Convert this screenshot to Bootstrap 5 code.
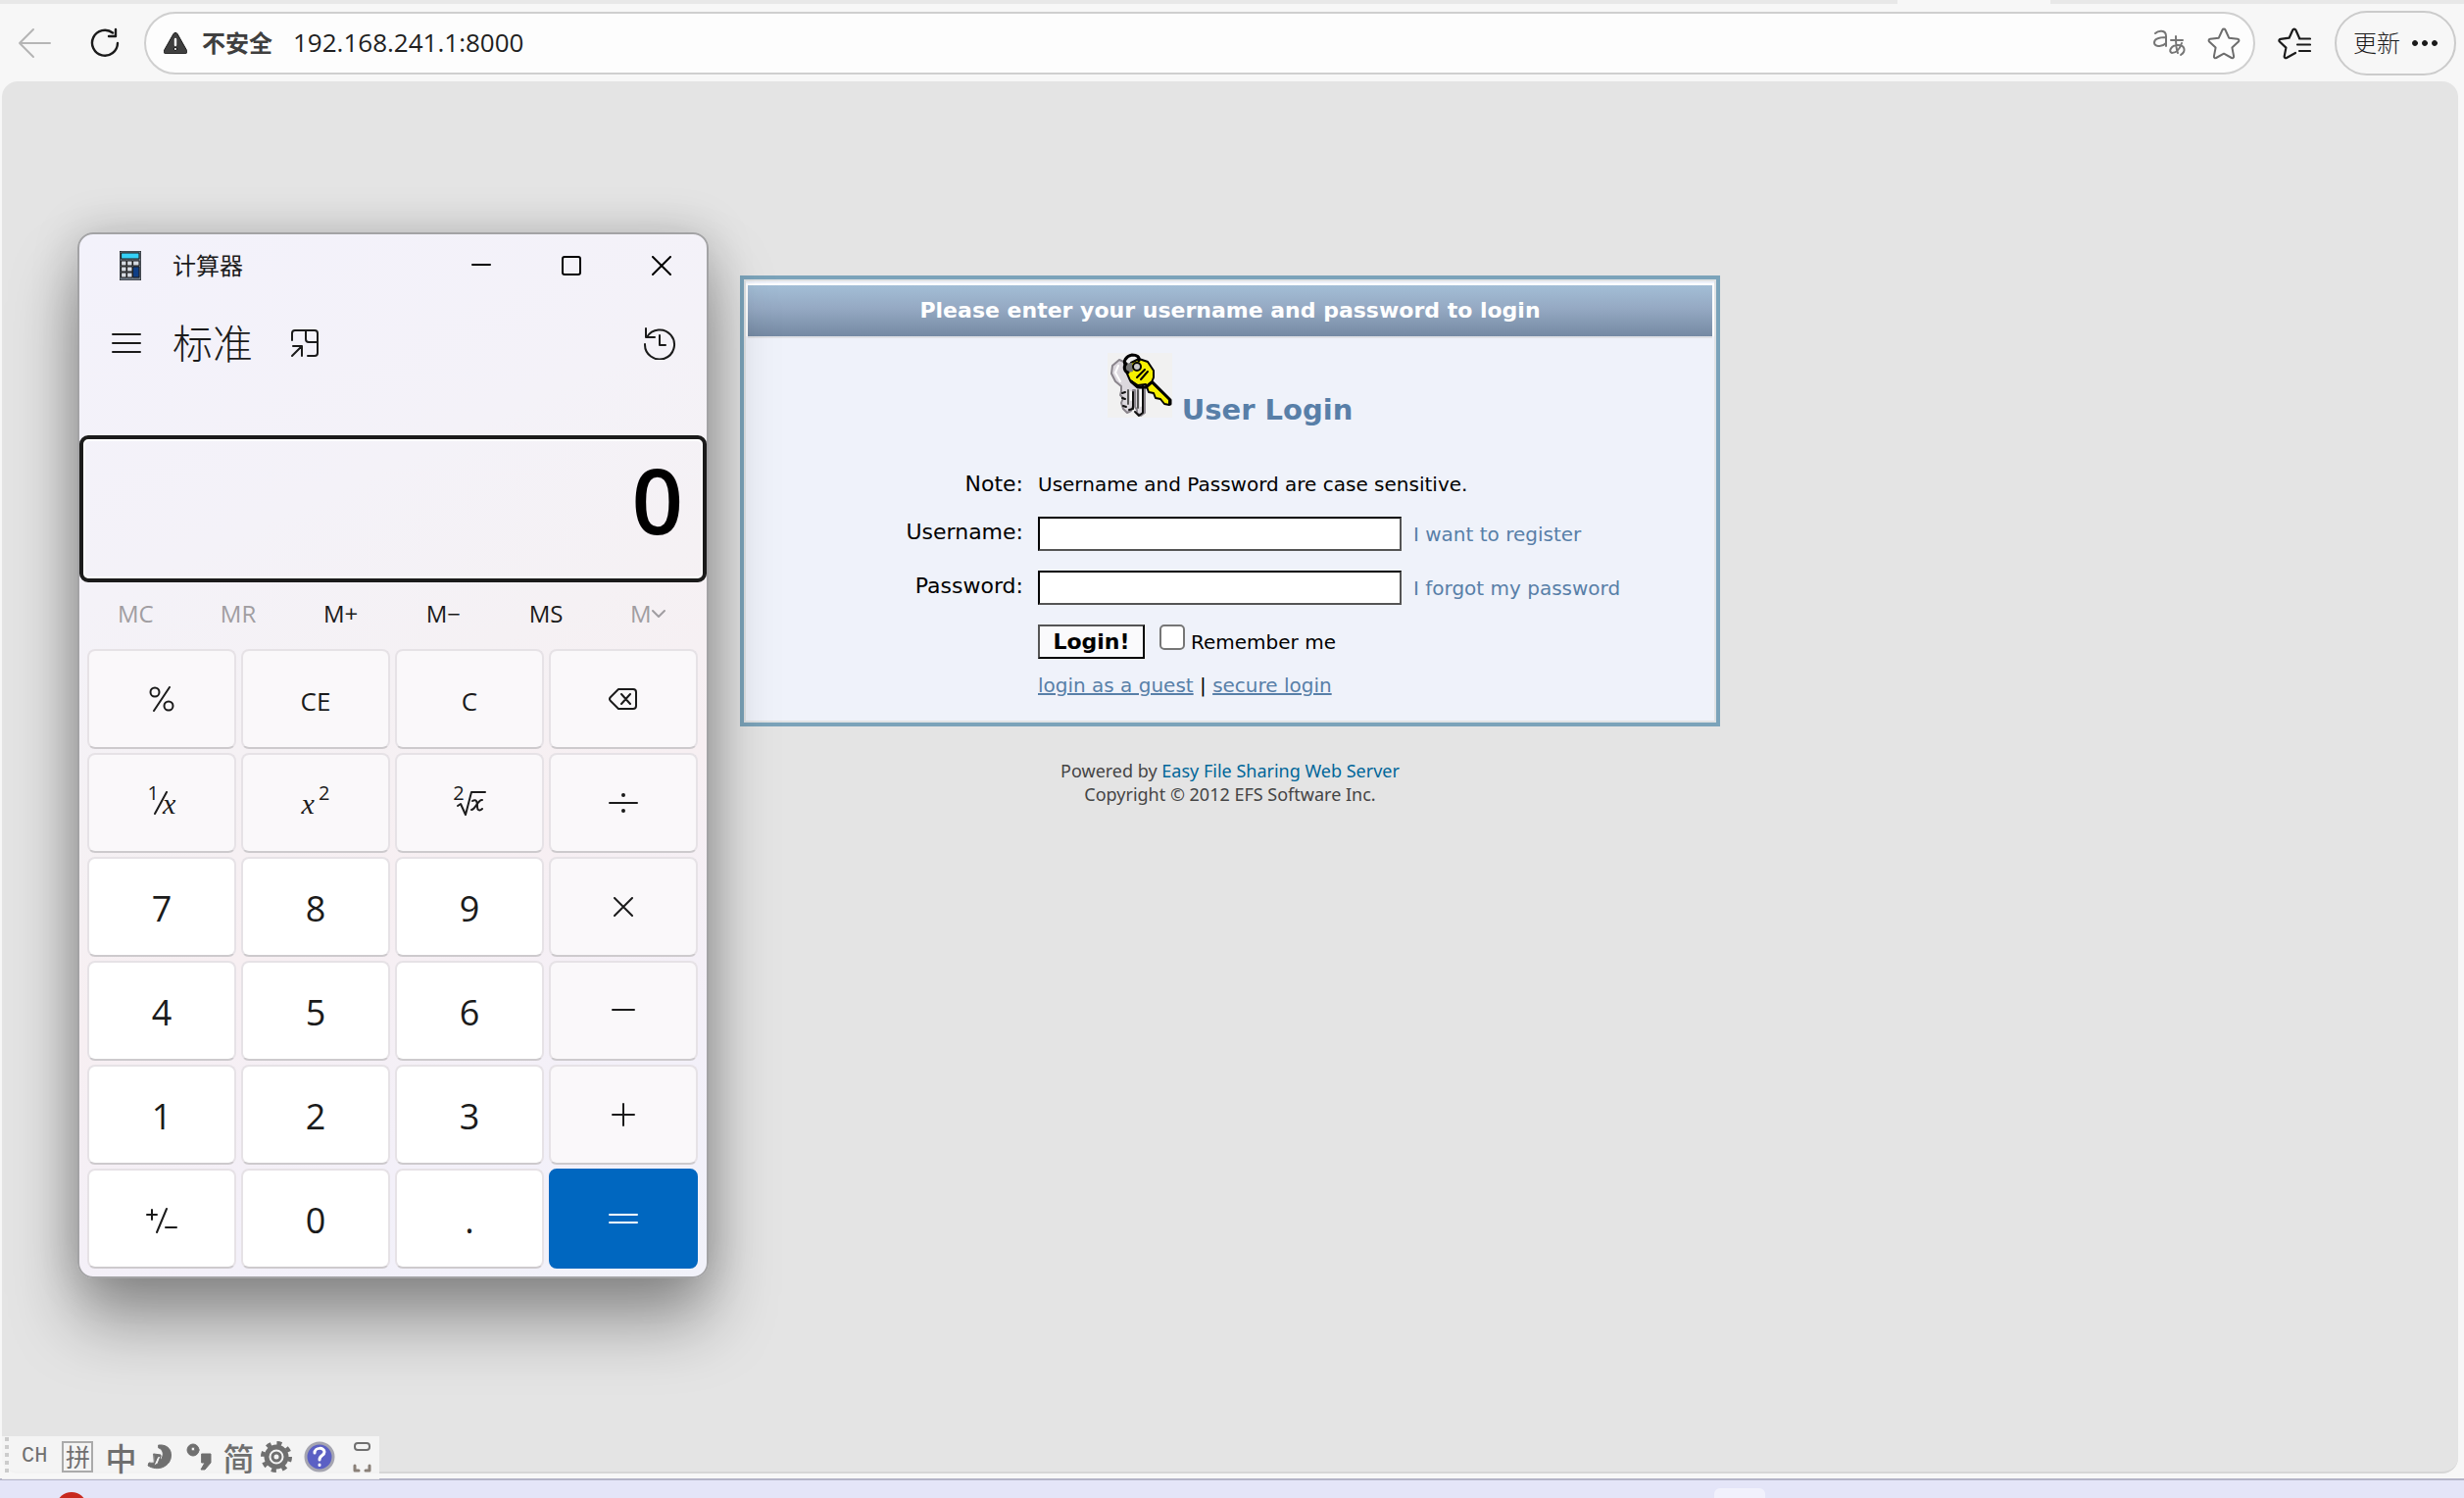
<!DOCTYPE html>
<html lang="zh-CN">
<head>
<meta charset="utf-8">
<meta name="viewport" content="width=device-width, initial-scale=1">
<title>User Login</title>
<link href="https://cdn.jsdelivr.net/npm/bootstrap@5.3.0/dist/css/bootstrap.min.css" rel="stylesheet">
<style>
:root { --ui: "Open Sans", "Noto Sans CJK SC", sans-serif; --web: "DejaVu Sans", sans-serif; }
body { font-family: var(--ui); background: #f7f7f7; color: #1b1b1b; min-height: 100vh; overflow: hidden; }
svg { display: block; fill: none; stroke: currentColor; stroke-linecap: round; stroke-linejoin: round; }
button { font-family: inherit; color: inherit; }
.plain { border: 0; background: none; padding: 0; display: flex; align-items: center; justify-content: center; }

/* browser chrome */
.tabstrip { height: 4px; background: #e8e8e8; }
.tab-active { width: 156px; height: 4px; margin-right: 422px; background: #f7f7f7; }
.toolbar { height: 79px; padding: 0 8px 0 18px; }
.address { height: 64px; border: 2px solid #cfcfcf; border-radius: 32px; background: #fdfdfd; margin-left: 25px; padding: 0 13px 0 18px; }
.insecure { font-size: 24px; font-weight: 700; color: #3f3f3f; margin-left: 15px; }
.url { border: 0; outline: 0; background: transparent; font-size: 26px; color: #1f1f1f; padding: 0; margin-left: 21px; min-width: 0; }
.update { height: 66px; border: 2px solid #cbcbcb; border-radius: 33px; font-size: 24px; font-weight: 300; width: 124px; gap: 12px; margin-left: 24px; }

/* page */
.viewport { margin: 0 6px 0 2px; background: #e4e4e4; border-radius: 16px; border-bottom: 2px solid #d6d6d6; padding-top: 198px; font-family: var(--web); color: #000; position: relative; }
.login-box { width: 1000px; border: 4px solid #7ba3ba; background: #eff2fa; outline: 2px solid #e0e2e4; outline-offset: -6px; padding: 4px 4px 21px; }
.login-head { height: 54px; margin: 0; border: 2px solid #fff; border-width: 2px 0 0; box-shadow: -2px 0 #fff, 2px 0 #fff, 0 2px #dfe1e6; background: linear-gradient(#a3bed6, #95a9c3 45%, #758aa3); color: #fff; font-size: 22px; font-weight: 700; }
.login-title { font-size: 29px; line-height: 36px; font-weight: 700; color: #587fa8; margin: 0; padding: 40px 0 0 10px; }
.title-row { padding-top: 17px; height: 127px; }
.form-line { display: grid; grid-template-columns: 281px 1fr; column-gap: 15px; align-items: center; font-size: 20px; }
.form-line > label, .form-line > span:first-child { font-size: 22px; text-align: right; }
.form-line > label { padding-bottom: 4px; }
.h-note { height: 47px; }
.h-field { height: 55px; }
.h-links { height: 34px; }
.text-in { width: 371px; height: 35px; border: 2px solid #555; border-top-color: #000; border-left-color: #000; background: #fff; padding: 0 4px; font-size: 20px; }
.side-link { color: #587fa8; text-decoration: none; margin-left: 12px; }
.under-link { color: #587fa8; text-decoration: underline; }
.login-btn { width: 109px; height: 35px; border: 2px solid #000; border-top-color: #555; border-left-color: #555; background: #fafafc; font-size: 22px; font-weight: 700; padding: 0; line-height: 1; }
.tick { appearance: none; width: 26px; height: 26px; border: 2px solid #767676; border-radius: 5px; background: #fff; margin: 0 6px 0 15px; align-self: flex-start; }
.foot { font-family: "Noto Sans", sans-serif; font-size: 18px; line-height: 24px; color: #444; margin-top: 33px; }
.foot a { color: #069; text-decoration: none; }

/* calculator window */
.calc { position: absolute; left: 77px; top: 154px; width: 644px; border: 2px solid #a3a3a5; border-radius: 16px; background: linear-gradient(155deg, #f3f2fb 0%, #f4f2f8 28%, #f5f1f4 45%, #f7eff2 60%, #f3f0f9 82%, #f1f2fa 100%); box-shadow: 0 44px 68px rgba(0,0,0,.36), 0 0 48px rgba(0,0,0,.18); font-family: var(--ui); color: #1b1b1b; }
.calc-title { height: 64px; padding-left: 41px; font-size: 24px; }
.cap { width: 92px; height: 60px; color: #000; }
.calc-nav { height: 94px; padding: 0 31px 0 33px; }
.mode { font-size: 41px; line-height: 60px; font-weight: 300; margin: 0 38px 0 32px; }
.display { display: block; height: 150px; margin-top: 47px; border: 4px solid #1b1b1b; border-radius: 9px; box-shadow: inset 0 0 0 2px #fff; text-align: right; font-size: 92px; line-height: 124px; font-weight: 600; color: #000; padding-right: 20px; }
.mem { height: 68px; padding: 0 7px 4px 5px; font-size: 24px; }
.mem button { flex: 1; height: 64px; }
.mem button:disabled { color: #a09da1; }
.keys { display: grid; grid-template-columns: repeat(4, 1fr); gap: 4px 5px; padding: 0 9px 8px 8px; }
.key { height: 102px; border: 2px solid #e6e2e6; border-bottom-color: #cdcacd; border-radius: 8px; background: #faf8fa; font-size: 26px; display: flex; align-items: center; justify-content: center; padding: 0; }
.num { background: #fff; font-size: 36px; padding-top: 3px; }
.eq { background: #0067c0; border-color: #0067c0; color: #fff; }
.ital { font-family: "Liberation Serif", serif; font-style: italic; font-size: 30px; }
.power { font-size: 20px; }
.lap { margin-left: -5px; }

/* input method bar */
.ime { position: absolute; left: 0; bottom: -8px; width: 385px; height: 44px; background: rgba(247,247,247,.85); color: #6f6f6f; font-family: "Noto Sans CJK SC", sans-serif; padding: 0 0 2px 3px; }
.grip { width: 4px; height: 40px; background: repeating-linear-gradient(#ccc 0 4px, transparent 4px 8px); margin-right: 13px; }
.ime-ch { font: 22px/32px "Liberation Mono", monospace; margin-right: 15px; }
.ime-pin { width: 32px; height: 32px; border: 2px solid #aaa; font-size: 25px; line-height: 27px; text-align: center; margin-right: 12px; }
.ime-zh { width: 34px; font-size: 32px; line-height: 32px; font-weight: 500; }
.desk { height: 20px; margin-top: 5px; border-top: 2px solid #b5b5c8; background: #e4e5f8; overflow: hidden; padding-left: 57px; }
.dot-red { width: 32px; height: 32px; border-radius: 50%; background: #c8281e; margin-top: 12px; }
.task { width: 52px; height: 30px; border-radius: 6px; background: #f1f1fc; margin: 8px 713px 0 auto; }
</style>
</head>
<body class="d-flex flex-column">
<div class="tabstrip d-flex justify-content-end"><div class="tab-active"></div></div>
<header class="toolbar d-flex align-items-center flex-shrink-0">
  <button class="plain" aria-label="Back" style="color:#b5b5b5"><svg width="34" height="32" viewBox="0 0 34 32" stroke-width="2"><path d="M16 2 2 16l14 14M2 16h31"/></svg></button>
  <button class="plain" aria-label="Refresh" style="margin-left:40px"><svg width="30" height="32" viewBox="0 0 30 32" stroke-width="2.400"><path d="M28 16a13 13 0 1 1-5-10.500M26 2v7h-7"/></svg></button>
  <div class="address d-flex align-items-center flex-grow-1">
    <svg width="24" height="22" viewBox="0 0 24 22" stroke="none"><path fill="#3f3f3f" d="M10 1.500a2.300 2.300 0 0 1 4 0l9.600 17A2.300 2.300 0 0 1 21.600 22H2.400a2.300 2.300 0 0 1-2-3.500z"/><path d="M12 7v6" stroke="#fff" stroke-width="2.400"/><circle cx="12" cy="17" r="1.600" fill="#fff"/></svg>
    <span class="insecure">不安全</span>
    <input class="url flex-grow-1" aria-label="Address" value="192.168.241.1:8000">
    <button class="plain" aria-label="Translate" style="color:#767676"><svg width="36" height="30" viewBox="0 0 36 30" stroke-width="2"><path d="M3 5c3-3 11-4 11 3v10M14 9C5 9 2 11 2 14.500S9 20 14 15M19 12h12M24 8c0 8 0 13 2 17M30 15c-2 6-6 10-10 10-4-1-1-8 6-8s9 6 3 10"/></svg></button>
    <button class="plain" aria-label="Favourite" style="color:#6d6d6d;margin-left:20px"><svg width="34" height="34" viewBox="0 0 34 34" stroke-width="2"><path d="M15.500 3.500c.6-1.200 2.400-1.200 3 0l3.700 8.200 8.800 1.100c1.400.2 1.900 1.800.9 2.700l-6.500 6.100 1.700 8.800c.2 1.300-1.100 2.300-2.300 1.600L17 27.700 9.200 32c-1.200.7-2.500-.3-2.300-1.600l1.700-8.800-6.500-6.100c-1-.9-.5-2.500.9-2.700l8.800-1.100z"/></svg></button>
  </div>
  <button class="plain" aria-label="Favourites list" style="margin-left:23px"><svg width="34" height="34" viewBox="0 0 34 34" stroke-width="2.200"><path d="M18 27l-9 5c-1.200.7-2.500-.3-2.300-1.600l1.700-8.800-6.500-6.100c-1-.9-.5-2.500.9-2.700l8.800-1.100 3.700-8.200c.6-1.200 2.400-1.200 3 0l3.700 8.200M22 12.500h11M20 18.500h13M22 25h11"/></svg></button>
  <button class="plain update">更新 <svg width="26" height="6" viewBox="0 0 26 6" stroke="none"><circle cx="3" cy="3" r="2.500" fill="#1b1b1b"/><circle cx="13" cy="3" r="2.500" fill="#1b1b1b"/><circle cx="23" cy="3" r="2.500" fill="#1b1b1b"/></svg></button>
</header>

<main class="viewport flex-grow-1 d-flex flex-column align-items-center">
  <form class="login-box" onsubmit="return false">
    <h2 class="login-head d-flex align-items-center justify-content-center">Please enter your username and password to login</h2>
    <div class="title-row d-flex justify-content-center">
      <svg width="66" height="66" viewBox="0 0 66 66" stroke="#111" stroke-width="2"><path fill="#f1f1f1" stroke="none" d="M0 0h66v66H0z"/><path fill="#dcd8de" stroke="#8a858c" d="M12 7 5 13 4 21l4 8 6 5v5l-1 4 3 3-2 5 2 6 4 4 4-2 2-5V38h2v17l2 3v3l4 3 4-3V36l-5-6-14-20z"/><path stroke="#111" d="M36 34v27l-4 3-4-4M26 40v17l-4 1M15 46l3 1M16 54l3 1M15 41l3-1"/><path stroke="#555" d="M21 38v14M31 38v18"/><path stroke="#fff" d="M11 13l-3 7 5 9M24 40v8M34 38v16"/><path fill="#f6f000" d="M24 10l8-4 9 3 6 9 0 7-2 5 18 17v6l-5-1-4-5-5-1-2-5-5-1-3-8-8 1-8-5-4-9z"/><path stroke-width="3" d="M46 30l18 18v4M24 29l7 6h8l6-5"/><path fill="none" stroke-width="3" d="M19 13c-4-4 0-10 6-11 5 0 8 2 7 6"/><path fill="#777" stroke="none" d="M18 11l7-1 1 9-5 1-4-3z"/><path stroke-width="3" d="M19 11c-3 3-2 8 2 9"/><circle cx="30" cy="14" r="4" fill="#c9c9c9"/><path d="M30 25l8-8M34 27l7-8"/></svg>
      <h1 class="login-title">User Login</h1>
    </div>
    <div class="form-line h-note"><span>Note:</span><span>Username and Password are case sensitive.</span></div>
    <div class="form-line h-field"><label for="u">Username:</label><div class="d-flex align-items-center"><input id="u" class="text-in" type="text"><a class="side-link" href="#">I want to register</a></div></div>
    <div class="form-line h-field"><label for="p">Password:</label><div class="d-flex align-items-center"><input id="p" class="text-in" type="password"><a class="side-link" href="#">I forgot my password</a></div></div>
    <div class="form-line h-field"><span></span><div class="d-flex align-items-center"><button class="login-btn" type="submit">Login!</button><input class="tick" type="checkbox" id="r"><label for="r">Remember me</label></div></div>
    <div class="form-line h-links"><span></span><div><a class="under-link" href="#">login as a guest</a> | <a class="under-link" href="#">secure login</a></div></div>
  </form>
  <footer class="foot text-center">Powered by <a href="#">Easy File Sharing Web Server</a><br>Copyright © 2012 EFS Software Inc.</footer>

  <section class="calc" aria-label="计算器">
    <div class="calc-title d-flex align-items-center">
      <svg width="22" height="30" viewBox="0 0 22 30" stroke="none"><rect width="22" height="30" rx="1" fill="#6f7b88"/><rect x="2" y="2" width="18" height="6" fill="#35d0f7"/><path fill="#d5dbe2" d="M2 10h5v5H2zM8 10h5v5H8zM14 10h6v5h-6zM2 16h5v5H2zM8 16h5v5H8zM2 22h5v5H2zM8 22h5v5H8z"/><path fill="#0f3f86" d="M14 16h6v11h-6z"/></svg>
      <span class="me-auto" style="padding-left:32px">计算器</span>
      <button class="plain cap" aria-label="Minimize"><svg width="20" height="20" viewBox="0 0 20 20" stroke-width="2"><path d="M1 9h18"/></svg></button>
      <button class="plain cap" aria-label="Maximize"><svg width="20" height="20" viewBox="0 0 20 20" stroke-width="2"><rect x="1" y="1" width="18" height="18" rx="2"/></svg></button>
      <button class="plain cap" aria-label="Close"><svg width="20" height="20" viewBox="0 0 20 20" stroke-width="2"><path d="M1 1l18 18M19 1 1 19"/></svg></button>
    </div>
    <div class="calc-nav d-flex align-items-center">
      <button class="plain" aria-label="Menu"><svg width="30" height="22" viewBox="0 0 30 22" stroke-width="2"><path d="M1 2h28M1 11h28M1 20h28"/></svg></button>
      <span class="mode">标准</span>
      <button class="plain me-auto" aria-label="Keep on top"><svg width="30" height="30" viewBox="0 0 30 30" stroke-width="2"><path d="M2 12V5a3 3 0 0 1 3-3h20a3 3 0 0 1 3 3v20a3 3 0 0 1-3 3h-7M16 2v9a3 3 0 0 0 3 3h9M2 28l10-10M3 18h9v10"/></svg></button>
      <button class="plain" aria-label="History"><svg width="34" height="34" viewBox="0 0 34 34" stroke-width="2"><path d="M3 2v9h9M4 11a15 15 0 1 1-2 7M17 9v10h6"/></svg></button>
    </div>
    <output class="display">0</output>
    <div class="mem d-flex align-items-center">
      <button class="plain" disabled>MC</button><button class="plain" disabled>MR</button><button class="plain">M+</button><button class="plain">M−</button><button class="plain">MS</button><button class="plain" disabled>M<svg width="16" height="12" viewBox="0 0 16 12" stroke-width="2"><path d="M2 3l6 6 6-6"/></svg></button>
    </div>
    <div class="keys">
      <button class="key" aria-label="Percent"><svg width="26" height="26" viewBox="0 0 26 26" stroke-width="2"><circle cx="6" cy="6" r="4.500"/><circle cx="20" cy="20" r="4.500"/><path d="M21 1 5 25"/></svg></button>
      <button class="key pt-1">CE</button><button class="key pt-1">C</button>
      <button class="key" aria-label="Backspace"><svg width="30" height="24" viewBox="0 0 30 24" stroke-width="2"><path d="M10 2h15a3 3 0 0 1 3 3v14a3 3 0 0 1-3 3H10l-8-8q-2-2 0-4zM13 7l9 10M22 7l-9 10"/></svg></button>
      <button class="key"><sup class="power">1</sup><svg class="lap" width="14" height="24" viewBox="0 0 14 24" stroke-width="2"><path d="M13 1 1 23"/></svg><span class="ital lap">x</span></button>
      <button class="key"><span class="ital">x</span><sup class="power ms-1">2</sup></button>
      <button class="key" aria-label="Square root"><sup class="power">2</sup><svg width="30" height="28" viewBox="0 0 30 28" stroke-width="2" style="margin-left:-8px"><path d="M1 17l3-2 5 11L15 3h14"/><path d="M16 12c5-3 5 3 5 6s2 5 5 2M26 11c-4-1-7 10-11 10"/></svg></button>
      <button class="key" aria-label="Divide"><svg width="30" height="22" viewBox="0 0 30 22" stroke-width="2"><path d="M1 11h28"/><circle cx="15" cy="3" r="1"/><circle cx="15" cy="19" r="1"/></svg></button>
      <button class="key num">7</button><button class="key num">8</button><button class="key num">9</button>
      <button class="key" aria-label="Multiply"><svg width="20" height="20" viewBox="0 0 20 20" stroke-width="2"><path d="M1 1l18 18M19 1 1 19"/></svg></button>
      <button class="key num">4</button><button class="key num">5</button><button class="key num">6</button>
      <button class="key" aria-label="Subtract"><svg width="24" height="24" viewBox="0 0 24 24" stroke-width="2"><path d="M1 11h22"/></svg></button>
      <button class="key num">1</button><button class="key num">2</button><button class="key num">3</button>
      <button class="key" aria-label="Add"><svg width="24" height="24" viewBox="0 0 24 24" stroke-width="2"><path d="M1 12h22M12 1v22"/></svg></button>
      <button class="key num" aria-label="Negate"><svg width="32" height="28" viewBox="0 0 32 28" stroke-width="2"><path d="M1 8h10M6 3v10M21 2 11 26M20 21h11"/></svg></button>
      <button class="key num">0</button><button class="key num">.</button>
      <button class="key eq" aria-label="Equals"><svg width="30" height="14" viewBox="0 0 30 14" stroke-width="2"><path d="M1 3h28M1 11h28"/></svg></button>
    </div>
  </section>

  <aside class="ime d-flex align-items-center">
    <span class="grip"></span>
    <span class="ime-ch">CH</span><span class="ime-pin">拼</span><span class="ime-zh">中</span>
    <svg width="32" height="30" viewBox="0 0 32 30" stroke="none" style="margin-left:7px"><path fill="#6f6f6f" d="M14 3c10-1 14 6 12 14S13 30 3 24l1-3c7 1 13-1 14-7 1-4-1-7-4-8z"/><path fill="#6f6f6f" d="M9 12l7 1-1 9-5 3z"/><path fill="#f1f1f1" d="M13 15l3-1-3 8-4 2z"/></svg>
    <svg width="32" height="30" viewBox="0 0 32 30" stroke="none" style="margin-left:7px"><circle cx="10" cy="8" r="6" fill="#6f6f6f"/><circle cx="10" cy="7" r="2" fill="#f1f1f1"/><path fill="#6f6f6f" d="M19 12h9v9l-6 7h-4l4-7h-3z"/></svg>
    <span class="ime-zh" style="margin-left:8px">简</span>
    <svg width="32" height="32" viewBox="0 0 32 32" style="margin-left:5px"><circle cx="16" cy="16" r="10" stroke-width="5"/><circle cx="16" cy="16" r="14" stroke-width="4" stroke-linecap="butt" stroke-dasharray="5 6"/><circle cx="16" cy="16" r="4" stroke-width="3"/></svg>
    <svg width="32" height="32" viewBox="0 0 32 32" style="margin-left:12px"><circle cx="16" cy="16" r="14" fill="#5b60c4" stroke="#a5a5b0" stroke-width="3"/><path d="M11 12c0-6 10-6 10-1 0 4-5 3-5 8M16 24v.500" stroke="#fff" stroke-width="3"/></svg>
    <svg width="20" height="32" viewBox="0 0 20 32" style="margin-left:18px" stroke="#a9a9b2" stroke-width="2"><rect x="2" y="2" width="15" height="7" rx="3"/><path stroke="#8a8078" stroke-width="3" d="M2 25v5h4M17 25v5h-4"/></svg>
  </aside>
</main>
<div class="desk d-flex flex-shrink-0"><span class="dot-red"></span><span class="task"></span></div>
<script src="https://cdn.jsdelivr.net/npm/bootstrap@5.3.0/dist/js/bootstrap.bundle.min.js"></script>
</body>
</html>
